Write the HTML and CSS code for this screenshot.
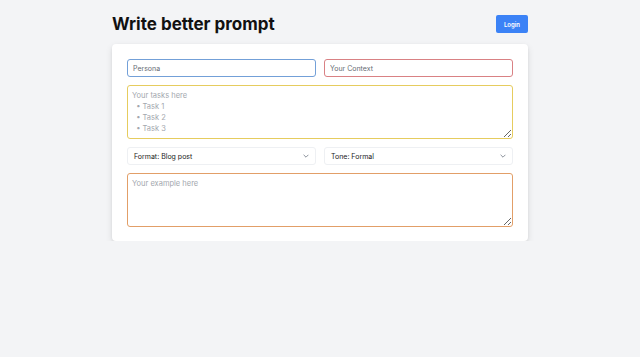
FILE: index.html
```html
<!DOCTYPE html>
<html>
<head>
<meta charset="utf-8">
<link rel="stylesheet" href="styles.css">
</head>
<body>
<div class="page">
  <header class="header">
    <h1 class="title">Write better prompt</h1>
    <button class="login">Login</button>
  </header>
  <main class="card">
    <div class="row">
      <input class="field persona" placeholder="Persona">
      <input class="field context" placeholder="Your Context">
    </div>
    <textarea class="area tasks" placeholder="Your tasks here
  • Task 1
  • Task 2
  • Task 3"></textarea>
    <div class="row">
      <div class="select">
        <span>Format: Blog post</span>
        <svg class="chev" viewBox="0 0 10 6" width="6" height="4"><path d="M1 1l4 4 4-4" fill="none" stroke="#6b7280" stroke-width="1.3"/></svg>
      </div>
      <div class="select">
        <span>Tone: Formal</span>
        <svg class="chev" viewBox="0 0 10 6" width="6" height="4"><path d="M1 1l4 4 4-4" fill="none" stroke="#6b7280" stroke-width="1.3"/></svg>
      </div>
    </div>
    <textarea class="area example" placeholder="Your example here"></textarea>
  </main>
</div>
</body>
</html>
```
FILE: styles.css
```css
* { box-sizing: border-box; }
body {
  margin: 0;
  background: #f3f4f6;
  font-family: Inter, "Noto Sans", sans-serif;
  color: #111111;
}
.page {
  width: 416px;
  margin: 0 auto;
  padding-top: 13px;
}
.header {
  display: flex;
  justify-content: space-between;
  align-items: center;
  height: 22px;
  margin-bottom: 9px;
}
.title {
  margin: 0;
  font-size: 17px;
  font-weight: 700;
  color: #111111;
}
.login {
  background: #3b82f6;
  color: #fff;
  border: none;
  border-radius: 2px;
  font-family: inherit;
  font-size: 6px;
  font-weight: 600;
  width: 32px;
  height: 18px;
  padding: 0;
}
.card {
  background: #fff;
  border-radius: 4px;
  box-shadow: 0 3px 7px rgba(0,0,0,0.1), 0 1px 3px rgba(0,0,0,0.06);
  padding: 15px 15px 14px;
  display: flex;
  flex-direction: column;
  gap: 8px;
}
.row {
  display: flex;
  gap: 8px;
}
.field {
  flex: 1;
  min-width: 0;
  height: 18px;
  border: 1.5px solid;
  border-radius: 3px;
  font-family: inherit;
  font-size: 7px;
  padding: 0 5px;
  outline: none;
}
.field::placeholder { color: #666b73; }
.persona { border-color: #73a0d8; }
.context { border-color: #d98184; }
.area {
  display: block;
  width: 100%;
  height: 54px;
  border: 1.5px solid;
  border-radius: 3px;
  font-family: inherit;
  font-size: 7.5px;
  line-height: 11px;
  padding: 4px 4px;
  resize: vertical;
  outline: none;
}
.area::placeholder { color: #a3a7ae; }
.tasks { border-color: #e6cc5e; }
.example { border-color: #e29f68; }
.select {
  flex: 1;
  height: 18px;
  border: 1px solid #eef0f3;
  border-radius: 3px;
  display: flex;
  align-items: center;
  justify-content: space-between;
  padding: 0 6px;
  font-size: 7px;
  color: #1a1a1a;
}
.chev { display: block; }
```
